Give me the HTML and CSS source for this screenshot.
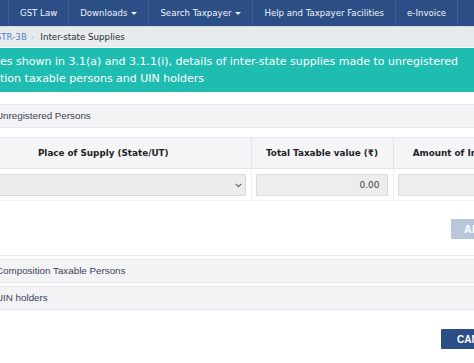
FILE: index.html
```html
<!DOCTYPE html>
<html lang="en">
<head>
<meta charset="utf-8">
<title>GSTR-3B Inter-state Supplies</title>
<link rel="stylesheet" href="styles.css">
</head>
<body>
<nav class="topnav">
  <ul class="menu">
    <li class="menu-item">GST Law</li>
    <li class="menu-item has-caret">Downloads</li>
    <li class="menu-item has-caret">Search Taxpayer</li>
    <li class="menu-item">Help and Taxpayer Facilities</li>
    <li class="menu-item">e-Invoice</li>
  </ul>
</nav>
<div class="crumbs">
  <a class="crumb-link">GSTR-3B</a><span class="crumb-sep">›</span><span class="crumb-current">Inter-state Supplies</span>
</div>
<div class="banner">
  <span class="banner-line">es shown in 3.1(a) and 3.1.1(i), details of inter-state supplies made to unregistered</span>
  <span class="banner-line">tion taxable persons and UIN holders</span>
</div>
<main class="content">
  <section class="panel">
    <div class="panel-head">Unregistered Persons</div>
    <div class="panel-body">
      <table class="grid">
        <colgroup>
          <col class="c1"><col class="c2"><col class="c3">
        </colgroup>
        <thead>
          <tr>
            <th>Place of Supply (State/UT)</th>
            <th>Total Taxable value (₹)</th>
            <th>Amount of Integrated tax (₹)</th>
          </tr>
        </thead>
        <tbody>
          <tr>
            <td>
              <div class="select">
                <select class="select-box"><option></option></select>
                <svg class="chev" width="7" height="5" viewBox="0 0 7 5"><path d="M0.8 0.8 L3.5 3.6 L6.2 0.8" fill="none" stroke="#666" stroke-width="1.2"/></svg>
              </div>
            </td>
            <td><div class="field">0.00</div></td>
            <td><div class="field"></div></td>
          </tr>
        </tbody>
      </table>
      <div class="actions actions-add"><button class="btn btn-add">ADD</button></div>
    </div>
  </section>
  <section class="panel">
    <div class="panel-head">Composition Taxable Persons</div>
  </section>
  <section class="panel">
    <div class="panel-head">UIN holders</div>
  </section>
  <div class="actions actions-cancel"><button class="btn btn-cancel">CANCEL</button></div>
</main>
</body>
</html>
```
FILE: styles.css
```css
html, body {
  margin: 0;
  padding: 0;
}
body {
  width: 474px;
  height: 363px;
  overflow: hidden;
  background: #ffffff;
  font-family: "DejaVu Sans", Verdana, sans-serif;
}

/* top navigation */
.topnav {
  background: #2b4e87;
  border-bottom: 1px solid #cfdbe8;
}
.menu {
  display: flex;
  margin: 0;
  padding: 0 0 0 8px;
  list-style: none;
  height: 26px;
}
.menu-item {
  display: flex;
  align-items: center;
  padding: 0 11px;
  border-left: 1px solid #3e5f95;
  color: #f1f4f9;
  font-size: 8.6px;
  white-space: nowrap;
}
.menu-item:last-child {
  border-right: 1px solid #3e5f95;
}
.has-caret::after {
  content: "";
  display: inline-block;
  margin-left: 4px;
  border-left: 3px solid transparent;
  border-right: 3px solid transparent;
  border-top: 3px solid #f1f4f9;
}

/* breadcrumb */
.crumbs {
  display: flex;
  align-items: center;
  height: 20px;
  background: #e8ebee;
  border-bottom: 1px solid #f4f6f7;
  font-size: 8.7px;
  color: #2b2b2b;
  white-space: nowrap;
}
.crumb-link {
  margin-left: -11px;
  color: #4f82c2;
}
.crumb-sep {
  margin: 0 6px 0 4px;
  color: #b9bec4;
}

/* banner */
.banner {
  display: flex;
  flex-direction: column;
  background: #1fbdb1;
  color: #ffffff;
  font-size: 11px;
  line-height: 17px;
  padding: 5px 0 5px 0;
  white-space: nowrap;
}

/* content */
.content {
  margin-left: -44px;
  width: 600px;
  padding-top: 12px;
}
.panel {
  margin-bottom: 3px;
}
.panel-head {
  height: 22px;
  line-height: 22px;
  background: #f3f3f5;
  border: 1px solid #e7e8eb;
  padding-left: 39px;
  font-family: "Liberation Sans", Arial, sans-serif;
  font-size: 9.8px;
  color: #3a4459;
}
.panel-body {
  padding: 9px 0 16px 0;
  border-bottom: 1px solid #ececef;
}

.grid {
  border-collapse: collapse;
  table-layout: fixed;
  width: 620px;
}
.c1 { width: 295px; }
.c2 { width: 142px; }
.c3 { width: 183px; }
.grid th {
  height: 30px;
  padding: 0;
  background: #f5f5f7;
  border-top: 1px solid #e4e4e8;
  border-bottom: 1px solid #e4e4e8;
  border-right: 1px solid #e4e4e8;
  font-size: 8.8px;
  font-weight: bold;
  color: #1f1f1f;
  text-align: center;
  white-space: nowrap;
}
.grid td {
  padding: 5px 5px 4px 4px;
  border-right: 1px solid #f0f0f2;
  border-bottom: 1px solid #f0f0f2;
}
.grid td:first-child {
  padding-left: 40px;
}
.select {
  position: relative;
}
.select-box {
  display: block;
  width: 100%;
  height: 22px;
  margin: 0;
  -webkit-appearance: none;
  appearance: none;
  background: #ececec;
  border: 1px solid #d8d8d8;
  border-radius: 2px;
}
.chev {
  position: absolute;
  right: 4px;
  top: 9px;
}
.field {
  box-sizing: border-box;
  height: 22px;
  line-height: 20px;
  background: #ededed;
  border: 1px solid #dcdcdc;
  border-radius: 1px;
  padding-right: 7px;
  text-align: right;
  font-size: 9px;
  color: #444;
}

.actions {
  display: flex;
}
.actions-add {
  padding: 18px 0 0 495px;
}
.actions-cancel {
  padding: 16px 0 0 485px;
}
.btn {
  height: 20px;
  padding: 0 14px 0 12px;
  border: 0;
  border-radius: 1px;
  color: #ffffff;
  font-family: "Liberation Sans", Arial, sans-serif;
  font-size: 10.5px;
  font-weight: bold;
  letter-spacing: 0.5px;
}
.btn-add {
  background: #b9c7d9;
  padding-left: 13px;
}
.btn-cancel {
  background: #2b4e87;
  padding: 0 16px;
  font-size: 10px;
  letter-spacing: 0;
}
```
